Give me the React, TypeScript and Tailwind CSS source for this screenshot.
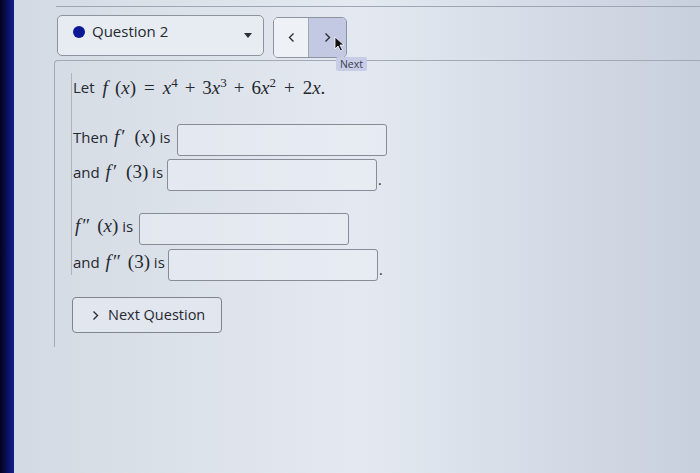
import React from "react";

// small chevron used in nav buttons and "Next Question"
function Chevron({ dir = "right" }: { dir?: "left" | "right" }) {
  return (
    <svg width="7" height="11" viewBox="0 0 7 11" className="block">
      <path
        d={dir === "right" ? "M1.5 1.5 L5.5 5.5 L1.5 9.5" : "M5.5 1.5 L1.5 5.5 L5.5 9.5"}
        fill="none"
        stroke="#2b2f36"
        strokeWidth="1.4"
      />
    </svg>
  );
}

function AnswerBox({ period = false }: { period?: boolean }) {
  return (
    <div className="flex items-end">
      <div className="w-[210px] h-[32px] rounded-[3px] border border-[#878c96] bg-[#e9edf3]/60" />
      {period && <span className="text-[14px] leading-none mb-[4px] ml-[1px]">.</span>}
    </div>
  );
}

const M = "font-['Liberation_Serif',serif] text-[19px] leading-none";

// f′ (x), f″ (3) ... as rendered by the math typesetter
function Fn({ primes, arg }: { primes: string; arg: string }) {
  return (
    <span className={`${M} ml-[2px] whitespace-nowrap`}>
      <i>f</i>
      <span className="ml-[2px]">{primes}</span>
      <span className={primes === "″" ? "ml-[7px]" : "ml-[9px]"}>
        ({arg === "x" ? <i>x</i> : arg})
      </span>
    </span>
  );
}

function Row({ labelW, mt, period, children }: { labelW: string; mt: string; period?: boolean; children: React.ReactNode }) {
  return (
    <div className={`${mt} h-[32px] shrink-0 flex items-center`}>
      <div className={`${labelW} pb-[6px] leading-[20px] whitespace-nowrap`}>{children}</div>
      <AnswerBox period={period} />
    </div>
  );
}

export default function App() {
  return (
    <div className="w-[700px] h-[473px] flex relative overflow-hidden font-['Open_Sans',sans-serif] text-[#25292f]">
      {/* edge of the monitor */}
      <div className="w-[14px] shrink-0 bg-linear-to-r from-[#03041a] via-[#0a0f5c] to-[#13208e]" />

      <div className="flex-1 flex flex-col bg-linear-to-r from-[#d4dae3] via-[#e4e9f1] to-[#c8d0dd]">
        <div className="ml-[42px] mt-[6px] border-t border-[#9ea6b4]" />

        {/* header */}
        <div className="flex items-start pl-[43px] mt-[8px]">
          <div className="w-[207px] h-[41px] rounded-[5px] border border-[#8d94a0] bg-[#e7ebf2] flex items-center pl-[15px] pr-[11px]">
            <div className="flex items-center mb-[8px]">
              <div className="w-[12px] h-[12px] rounded-full bg-[#0c1796]" />
              <span className="ml-[7px] text-[15px]">Question 2</span>
            </div>
            <div className="ml-auto w-0 h-0 border-l-[4px] border-r-[4px] border-t-[5px] border-l-transparent border-r-transparent border-t-[#2b2f36]" />
          </div>
          <div className="ml-[9px] mt-[2px] w-[74px] h-[41px] rounded-[5px] border border-[#8d94a0] flex overflow-hidden">
            <div className="w-[35px] bg-[#eef1f6] border-r border-[#a2a8b4] flex items-center justify-center">
              <Chevron dir="left" />
            </div>
            <div className="flex-1 bg-[#c3c8e3] flex items-center justify-center">
              <Chevron />
            </div>
          </div>
        </div>

        {/* question panel */}
        <div className="ml-[40px] mt-[2px] h-[287px] border-l border-t border-[#a3a9b3] rounded-tl-[4px] pl-[16px] pt-[12px]">
          <div className="h-[202px] border-l border-[#b0b5bd] pl-[1px] flex flex-col text-[15px]">
            <div className="h-[28px] shrink-0 flex items-center">
              <span>Let</span>
              <span className={`${M} ml-[8px] whitespace-nowrap`}>
                <i>f</i>
                <span className="ml-[7px]">(</span>
                <i>x</i>)<span className="px-[8px]">=</span>
                <i>x</i>
                <sup className="text-[13px]">4</sup>
                <span className="px-[7px]">+</span>3<i>x</i>
                <sup className="text-[13px]">3</sup>
                <span className="px-[7px]">+</span>6<i>x</i>
                <sup className="text-[13px]">2</sup>
                <span className="px-[8px]">+</span>2<i>x</i>.
              </span>
            </div>

            <Row mt="mt-[23px]" labelW="w-[104px]">
              Then <Fn primes="′" arg="x" /> is
            </Row>
            <Row mt="mt-[3px]" labelW="w-[94px]" period>
              and <Fn primes="′" arg="3" /> is
            </Row>
            <Row mt="mt-[22px]" labelW="w-[66px]">
              <Fn primes="″" arg="x" /> is
            </Row>
            <Row mt="mt-[4px]" labelW="w-[95px]" period>
              and <Fn primes="″" arg="3" /> is
            </Row>
          </div>

          <button className="mt-[22px] ml-[1px] w-[150px] h-[36px] rounded-[4px] border border-[#7f8590] bg-[#e2e6ee] flex items-center pl-[19px] text-[14.5px] text-[#25292f]">
            <Chevron />
            <span className="ml-[9px]">Next Question</span>
          </button>
        </div>
      </div>

      {/* mouse pointer over the next arrow */}
      <svg width="11" height="16" viewBox="0 0 11 16" className="absolute left-[334px] top-[36px]">
        <path d="M1 1 L1 13 L4 10 L6.5 15 L8.5 14 L6 9 L10 9 Z" fill="#111" stroke="#fff" strokeWidth="0.8" />
      </svg>
      {/* tooltip */}
      <div className="absolute left-[336px] top-[57px] w-[31px] h-[14px] rounded-[2px] bg-[#c8cce6] text-[10.5px] leading-[14px] text-center text-[#3b4050]">
        Next
      </div>
    </div>
  );
}
